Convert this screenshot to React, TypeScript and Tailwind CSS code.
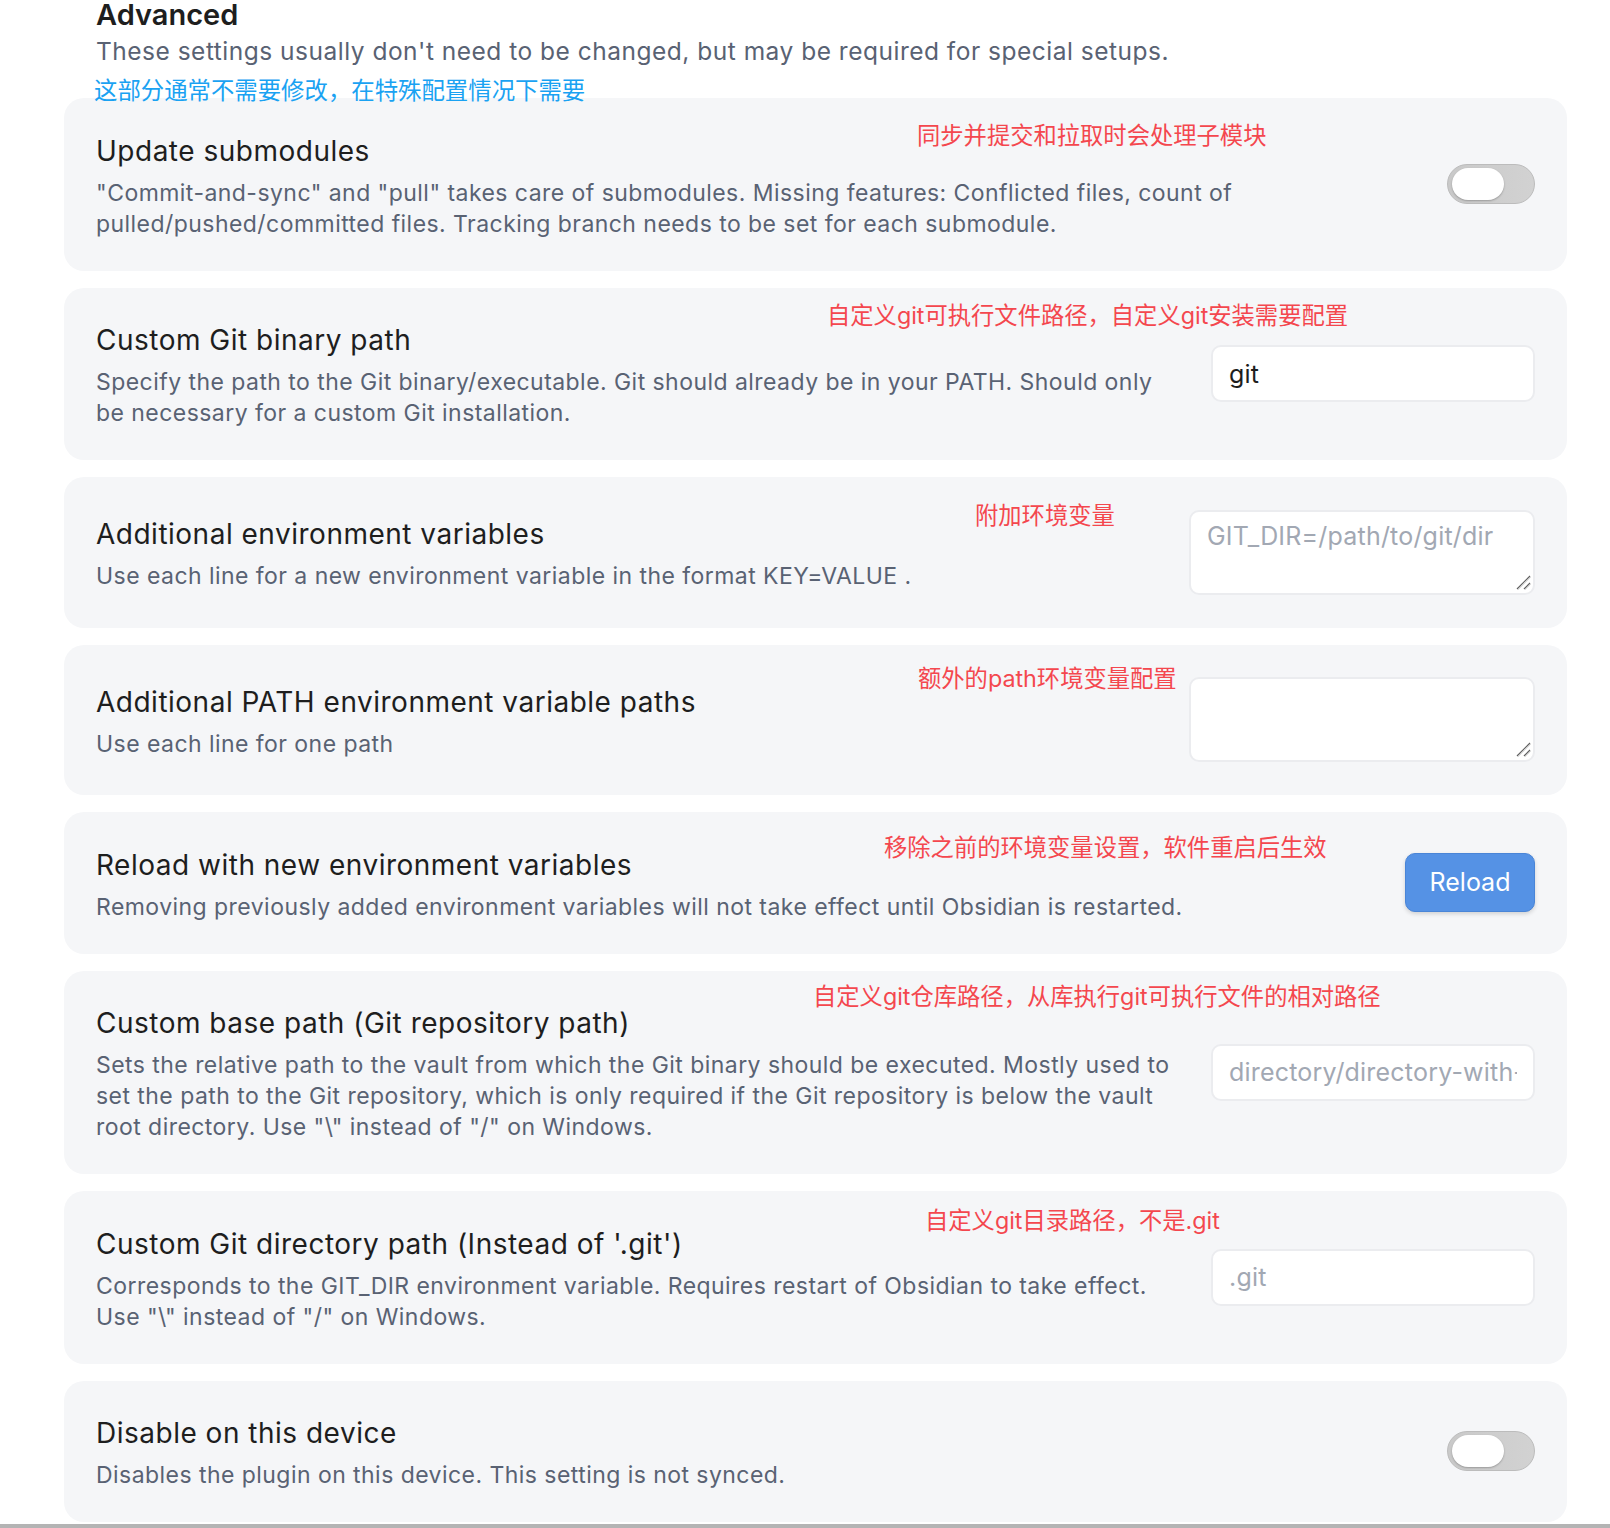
import React from "react";

type CardProps = {
  title: string;
  desc: React.ReactNode;
  control: React.ReactNode;
  note?: string;
  noteClass?: string;
};

function Toggle() {
  return (
    <div className="relative h-[40px] w-[88px] rounded-full border border-[#bcbcbc] bg-gradient-to-r from-[#c9c9c9] to-[#d2d2d2]">
      <div className="absolute left-[4px] top-[3px] h-[32px] w-[52px] rounded-full bg-white shadow-[0_1px_2px_rgba(0,0,0,0.25)]" />
    </div>
  );
}

function TextInput({ value, placeholder }: { value?: string; placeholder?: string }) {
  return (
    <input
      readOnly
      defaultValue={value}
      placeholder={placeholder}
      className="h-[57px] w-[324px] rounded-[10px] border-2 border-[#ebecef] bg-white px-[16px] text-[25px] tracking-[0.2px] text-[#1e1e1e] outline-none placeholder:text-[#a2a8b3]"
    />
  );
}

function TextArea({ placeholder }: { placeholder?: string }) {
  return (
    <div className="relative">
      <textarea
        readOnly
        placeholder={placeholder}
        className="block h-[85px] w-[346px] resize-none rounded-[10px] border-2 border-[#ebecef] bg-white px-[16px] pt-[9px] text-[25px] leading-[30px] tracking-[0.2px] text-[#1e1e1e] outline-none placeholder:text-[#a2a8b3]"
      />
      <svg
        className="pointer-events-none absolute bottom-[5px] right-[4px]"
        width="15"
        height="15"
        viewBox="0 0 15 15"
        fill="none"
      >
        <line x1="1" y1="14" x2="14" y2="1" stroke="#5f5f5f" strokeWidth="1.2" />
        <line x1="2" y1="15" x2="15" y2="2" stroke="#d6d6d6" strokeWidth="0.8" />
        <line x1="8" y1="14" x2="14" y2="8" stroke="#5f5f5f" strokeWidth="1.2" />
        <line x1="9" y1="15" x2="15" y2="9" stroke="#d6d6d6" strokeWidth="0.8" />
      </svg>
    </div>
  );
}

function Card({ title, desc, control, note, noteClass }: CardProps) {
  return (
    <div className="relative flex items-center gap-8 rounded-[20px] bg-[#f5f6f8] px-8 py-[32.75px]">
      <div className="min-w-0 flex-1 translate-y-[1.5px]">
        <div className="whitespace-nowrap text-[28px] leading-[36px] tracking-[0.5px] text-[#1e1e1e]">{title}</div>
        <div className="mt-[9px] whitespace-nowrap text-[23px] leading-[31px] tracking-[0.45px] text-[#596273]">
          {desc}
        </div>
      </div>
      <div className="flex shrink-0 items-center">{control}</div>
      {note && (
        <div
          className={
            "absolute whitespace-nowrap text-[23.3px] leading-[28px] text-[#f4474e] " + (noteClass ?? "")
          }
        >
          {note}
        </div>
      )}
    </div>
  );
}

export default function App() {
  return (
    <div className="h-[1528px] overflow-hidden bg-white font-['Inter','Noto_Sans_CJK_SC',sans-serif]">
      <div className="pl-[64px] pr-[43px]">
        <div className="relative px-8 pb-[31px]">
          <div className="text-[29px] font-semibold leading-[30px] text-[#1e1e1e]">Advanced</div>
          <div className="mt-[6px] whitespace-nowrap text-[24.5px] leading-[31px] tracking-[0.5px] text-[#596273]">
            These settings usually don't need to be changed, but may be required for special setups.
          </div>
          <div className="absolute left-[30px] top-[77px] z-10 whitespace-nowrap text-[23.4px] leading-[28px] text-[#1aa2f2]">
            这部分通常不需要修改，在特殊配置情况下需要
          </div>
        </div>

        <div className="flex flex-col gap-[17px]">
          <Card
            title="Update submodules"
            desc={
              <>
                "Commit-and-sync" and "pull" takes care of submodules. Missing features: Conflicted files, count of
                <br />
                pulled/pushed/committed files. Tracking branch needs to be set for each submodule.
              </>
            }
            control={<Toggle />}
            note="同步并提交和拉取时会处理子模块"
            noteClass="left-[853px] top-[24px]"
          />
          <Card
            title="Custom Git binary path"
            desc={
              <>
                Specify the path to the Git binary/executable. Git should already be in your PATH. Should only
                <br />
                be necessary for a custom Git installation.
              </>
            }
            control={<TextInput value="git" />}
            note="自定义git可执行文件路径，自定义git安装需要配置"
            noteClass="left-[763px] top-[14px]"
          />
          <Card
            title="Additional environment variables"
            desc="Use each line for a new environment variable in the format KEY=VALUE ."
            control={<TextArea placeholder="GIT_DIR=/path/to/git/dir" />}
            note="附加环境变量"
            noteClass="left-[911px] top-[25px]"
          />
          <Card
            title="Additional PATH environment variable paths"
            desc="Use each line for one path"
            control={<TextArea />}
            note="额外的path环境变量配置"
            noteClass="left-[854px] top-[20px]"
          />
          <Card
            title="Reload with new environment variables"
            desc="Removing previously added environment variables will not take effect until Obsidian is restarted."
            control={
              <button className="h-[59px] w-[130px] rounded-[10px] border border-[#4a85d7] bg-[#5592e5] text-[25px] text-white shadow-[0_2px_4px_rgba(0,0,0,0.15)]">
                Reload
              </button>
            }
            note="移除之前的环境变量设置，软件重启后生效"
            noteClass="left-[820px] top-[22px]"
          />
          <Card
            title="Custom base path (Git repository path)"
            desc={
              <>
                Sets the relative path to the vault from which the Git binary should be executed. Mostly used to
                <br />
                set the path to the Git repository, which is only required if the Git repository is below the vault
                <br />
                root directory. Use "\" instead of "/" on Windows.
              </>
            }
            control={<TextInput placeholder="directory/directory-with-spaces" />}
            note="自定义git仓库路径，从库执行git可执行文件的相对路径"
            noteClass="left-[749px] top-[12px]"
          />
          <Card
            title="Custom Git directory path (Instead of '.git')"
            desc={
              <>
                Corresponds to the GIT_DIR environment variable. Requires restart of Obsidian to take effect.
                <br />
                Use "\" instead of "/" on Windows.
              </>
            }
            control={<TextInput placeholder=".git" />}
            note="自定义git目录路径，不是.git"
            noteClass="left-[861px] top-[16px]"
          />
          <Card
            title="Disable on this device"
            desc="Disables the plugin on this device. This setting is not synced."
            control={<Toggle />}
          />
        </div>
      </div>
      <div className="mt-[2px] h-[4px] w-full bg-[#b4b4b4]" />
    </div>
  );
}
